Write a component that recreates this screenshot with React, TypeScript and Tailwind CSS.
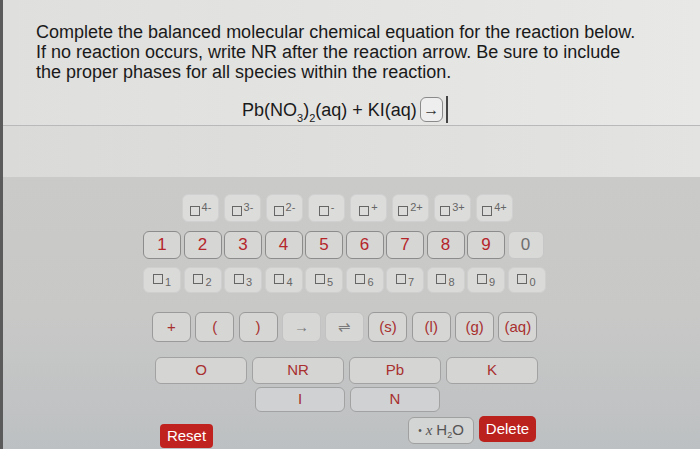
import React from "react";

function ChargeKey({ label }: { label: string }) {
  return (
    <div className="w-[37px] h-[28px] rounded-[6px] bg-[#dcdcdb] border border-[#d0d0d0] flex items-center justify-center">
      <div className="flex items-start h-[15px] pt-[1px]">
        <span className="block w-[10px] h-[10px] mt-[4px] border border-[#666]" />
        <span className="block ml-[2px] text-[11px] leading-[11px] text-[#666]">{label}</span>
      </div>
    </div>
  );
}

function SubKey({ label }: { label: string }) {
  return (
    <div className="w-[38px] h-[26px] rounded-[6px] bg-[#dadad9] border border-[#cfcfcf] flex items-center justify-center">
      <div className="flex items-end h-[15px]">
        <span className="block w-[10px] h-[10px] mb-[4px] border border-[#666]" />
        <span className="block ml-[2px] text-[11px] leading-[11px] text-[#666]">{label}</span>
      </div>
    </div>
  );
}

export default function App() {
  const charges = ["4-", "3-", "2-", "-", "+", "2+", "3+", "4+"];
  const nums = ["1", "2", "3", "4", "5", "6", "7", "8", "9"];
  const subs = ["1", "2", "3", "4", "5", "6", "7", "8", "9", "0"];
  const row4: { t: string; dim?: boolean }[] = [
    { t: "+" },
    { t: "(" },
    { t: ")" },
    { t: "→", dim: true },
    { t: "⇌", dim: true },
    { t: "(s)" },
    { t: "(l)" },
    { t: "(g)" },
    { t: "(aq)" },
  ];
  return (
    <div
      className="w-[700px] h-[449px] overflow-hidden flex flex-col border-l-[3px] border-[#5b5b5b] bg-[#cbcbc9]"
      style={{ fontFamily: '"Liberation Sans", Arial, sans-serif' }}
    >
      {/* question panel */}
      <div className="h-[126px] shrink-0 bg-gradient-to-r from-[#dfdfdd] to-[#e8e8e7] border-b border-[#b9b9b9] flex flex-col">
        <div className="pt-[22px] pl-[33px] text-[18px] leading-[20px] text-[#1a1a1a]">
          <div>Complete the balanced molecular chemical equation for the reaction below.</div>
          <div>If no reaction occurs, write NR after the reaction arrow. Be sure to include</div>
          <div>the proper phases for all species within the reaction.</div>
        </div>
        <div className="mt-[14px] ml-[239px] flex items-center">
          <span className="text-[18px] leading-[24px] text-[#1a1a1a]">
            Pb(NO<sub className="text-[11px] -bottom-[6px]">3</sub>)<sub className="text-[11px] -bottom-[6px]">2</sub>(aq) + KI(aq)
          </span>
          <span className="ml-[3px] w-[23px] h-[25px] rounded-[6px] border border-[#8a8a8a] bg-[#eeeeee] flex items-center justify-center text-[16px] text-[#333]">
            →
          </span>
          <span className="ml-[3px] w-[2px] h-[27px] bg-[#444]" />
        </div>
      </div>

      {/* gap band */}
      <div className="h-[51px] shrink-0 bg-gradient-to-r from-[#dadad8] to-[#e3e3e2]" />

      {/* keyboard */}
      <div className="flex-1 flex flex-col pt-[17px] bg-gradient-to-b from-[#cacac8] via-[#c8c8c7] to-[#bdc0c2]">
        <div className="ml-[179px] flex gap-[5px]">
          {charges.map((c) => (
            <ChargeKey key={c} label={c} />
          ))}
        </div>

        <div className="mt-[9px] ml-[140px] flex gap-[2.5px]">
          {nums.map((n) => (
            <div
              key={n}
              className="w-[38px] h-[28px] rounded-[6px] bg-[#d6d6d5] border border-[#8c8c8c] flex items-center justify-center text-[17px] text-[#b5262b]"
            >
              {n}
            </div>
          ))}
          <div className="w-[36px] h-[28px] rounded-[6px] bg-[#d9d9d8] border border-[#c6c6c6] flex items-center justify-center text-[17px] text-[#6e6e6e]">
            0
          </div>
        </div>

        <div className="mt-[8px] ml-[140px] flex gap-[2.5px]">
          {subs.map((s) => (
            <SubKey key={s} label={s} />
          ))}
        </div>

        <div className="mt-[19px] ml-[149px] flex gap-[4.3px]">
          {row4.map((k) => (
            <div
              key={k.t}
              className={
                k.dim
                  ? "w-[39px] h-[30px] rounded-[6px] bg-[#d7d7d6] border border-[#c2c2c2] flex items-center justify-center text-[15px] text-[#7a7a7a]"
                  : "w-[39px] h-[30px] rounded-[6px] bg-[#d6d6d5] border border-[#9a9a9a] flex items-center justify-center text-[15px] text-[#a8302f]"
              }
            >
              {k.t}
            </div>
          ))}
        </div>

        <div className="mt-[15px] ml-[152px] flex gap-[5px]">
          {["O", "NR", "Pb", "K"].map((t) => (
            <div
              key={t}
              className="w-[92px] h-[27px] rounded-[6px] bg-[#d5d5d4] border border-[#a2a2a2] flex items-center justify-center text-[15px] text-[#a8302f]"
            >
              {t}
            </div>
          ))}
        </div>

        <div className="mt-[3px] ml-[252px] flex gap-[5px]">
          {["I", "N"].map((t) => (
            <div
              key={t}
              className="w-[90px] h-[25px] rounded-[6px] bg-[#cfd1d2] border border-[#a2a2a2] flex items-center justify-center text-[15px] text-[#a8302f]"
            >
              {t}
            </div>
          ))}
        </div>

        <div className="mt-[4px] flex items-start">
          <div className="ml-[157px] mt-[8px] w-[53px] h-[24px] rounded-[4px] bg-[#c0231f] flex items-center justify-center text-[15px] text-white">
            Reset
          </div>
          <div className="ml-[195px] mt-[1px] w-[66px] h-[27px] rounded-[6px] bg-[#d3d4d4] border border-[#a0a0a0] flex items-center justify-center text-[15px] text-[#555]">
            <span className="text-[10px] mr-[4px]">•</span>
            <span className="italic mr-[4px]" style={{ fontFamily: '"Liberation Serif", serif' }}>x</span>
            <span>H<sub className="text-[9px]">2</sub>O</span>
          </div>
          <div className="ml-[5px] w-[57px] h-[26px] rounded-[5px] bg-[#bb211d] flex items-center justify-center text-[15px] text-white">
            Delete
          </div>
        </div>
      </div>
    </div>
  );
}
